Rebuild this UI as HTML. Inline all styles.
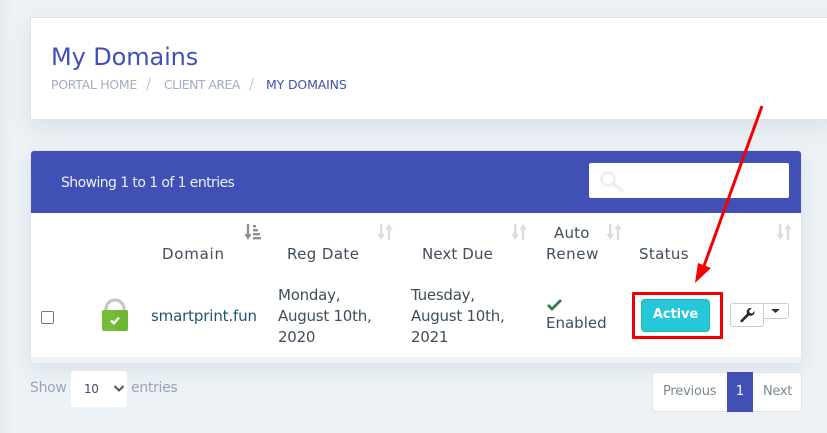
<!DOCTYPE html>
<html><head><meta charset="utf-8"><style>
html,body{margin:0;padding:0}
body{width:827px;height:433px;overflow:hidden;position:relative;background:#ecf2f6;font-family:"DejaVu Sans","Liberation Sans",sans-serif;color:#3a4a5a}
.a{position:absolute;white-space:nowrap}
.t{font-size:15px;line-height:21px;color:#3f4d5c}
</style></head><body>
<div class="a" style="left:0;top:0;width:14px;height:433px;background:linear-gradient(90deg,#e6edf1,#ecf2f6)"></div>
<div class="a" style="left:30px;top:17px;width:800px;height:101px;background:#fff;border:1px solid #dde3e7;box-shadow:0 8px 22px rgba(60,80,100,.1)"></div>
<div class="a" style="left:51px;top:42px;font-size:24px;line-height:30px;color:#4150b5;letter-spacing:-.1px">My Domains</div>
<div class="a" style="left:51px;top:76px;font-size:12.5px;line-height:17px;color:#a3adbd;letter-spacing:-.3px">PORTAL HOME</div>
<div class="a" style="left:146px;top:75px;font-size:15px;line-height:19px;color:#c5cbd3">/</div>
<div class="a" style="left:164px;top:76px;font-size:12.5px;line-height:17px;color:#a3adbd;letter-spacing:-.55px">CLIENT AREA</div>
<div class="a" style="left:249px;top:75px;font-size:15px;line-height:19px;color:#c5cbd3">/</div>
<div class="a" style="left:266px;top:76px;font-size:12.5px;line-height:17px;color:#4150b5;letter-spacing:-.15px">MY DOMAINS</div>

<div class="a" style="left:31px;top:151px;width:770px;height:212px;background:#fff;border-radius:3px 3px 0 0;box-shadow:0 0 0 1px #dfe5e9,0 6px 20px rgba(60,80,100,.1)"></div>
<div class="a" style="left:31px;top:151px;width:770px;height:62px;background:#4050b4;border-radius:3px 3px 0 0"></div>
<div class="a" style="left:31px;top:357px;width:770px;height:6px;background:#edf3f7"></div>
<div class="a" style="left:61px;top:174px;font-size:14px;line-height:18px;color:#edf0fa;letter-spacing:-.58px">Showing 1 to 1 of 1 entries</div>
<div class="a" style="left:589px;top:163px;width:200px;height:35px;background:#fff;border-radius:2px"></div>
<svg class="a" style="left:598px;top:169px" width="28" height="26" viewBox="0 0 28 26"><circle cx="10" cy="10" r="6.5" fill="none" stroke="#eceef0" stroke-width="2.6"/><path d="M15 15L24 21.5" stroke="#eceef0" stroke-width="3.6" stroke-linecap="round"/></svg>

<div class="a t" style="left:162px;top:244px;letter-spacing:.75px">Domain</div>
<div class="a t" style="left:287px;top:244px;letter-spacing:.4px">Reg Date</div>
<div class="a t" style="left:422px;top:244px;letter-spacing:.12px">Next Due</div>
<div class="a t" style="left:554px;top:223px;letter-spacing:.2px">Auto</div>
<div class="a t" style="left:546px;top:244px;letter-spacing:.6px">Renew</div>
<div class="a t" style="left:639px;top:244px;letter-spacing:.35px">Status</div>

<svg class="a" style="left:0;top:0" width="827" height="433" viewBox="0 0 827 433">
<g fill="none" stroke="#8c8f93" stroke-width="2.4"><path d="M248 224V238"/><path d="M245 234L248 239L251 234" fill="#8c8f93" stroke-width="1"/></g>
<g fill="#8c8f93"><rect x="253" y="225" width="3" height="2.4"/><rect x="253" y="229" width="5" height="2.4"/><rect x="253" y="233" width="7" height="2.4"/><rect x="253" y="237" width="8" height="2.4"/></g>
<g id="s" fill="#dcdcdc">
<path d="M380 224h2.400v10h2.400l-3.600 6-3.600-6h2.400zM387.800 240v-10.500h-2.400l3.600-5.500 3.600 5.500h-2.400V240z"/>
<path d="M514 224h2.400v10h2.400l-3.600 6-3.600-6h2.400zM521.800 240v-10.500h-2.400l3.600-5.500 3.600 5.500h-2.400V240z"/>
<path d="M609 224h2.400v10h2.400l-3.600 6-3.600-6h2.400zM616.800 240v-10.500h-2.400l3.600-5.500 3.600 5.500h-2.400V240z"/>
<path d="M779 224h2.400v10h2.400l-3.600 6-3.600-6h2.400zM786.800 240v-10.500h-2.400l3.600-5.500 3.600 5.500h-2.400V240z"/>
</g>
<path d="M106 312V309a9 9 0 0 1 18 0V312" fill="none" stroke="#c6c6c6" stroke-width="3.200"/>
<rect x="102" y="310" width="26" height="21" rx="2" fill="#77bd3c"/>
<path d="M115 310h11a2 2 0 0 1 2 2v17a2 2 0 0 1-2 2h-11z" fill="#6fb536"/>
<path d="M111 320.500l3 2.800 5-5.800" fill="none" stroke="#fff" stroke-width="2.400"/>
<path d="M548 305l4 4 9-9" fill="none" stroke="#3c7a4c" stroke-width="2.800"/>
</svg>

<div class="a" style="left:41px;top:311px;width:11px;height:11px;border:1px solid #777;border-radius:2px;background:#fff"></div>
<div class="a" style="left:151px;top:305px;font-size:15px;line-height:22px;color:#1f5573;letter-spacing:-.15px">smartprint.fun</div>
<div class="a t" style="left:278px;top:285px;letter-spacing:-.25px">Monday,<br>August 10th,<br>2020</div>
<div class="a t" style="left:411px;top:285px;letter-spacing:-.25px">Tuesday,<br>August 10th,<br>2021</div>
<div class="a t" style="left:546px;top:313px">Enabled</div>

<div class="a" style="left:632px;top:292px;width:85px;height:41px;border:3px solid #f40000;border-radius:1px;background:#fff"></div>
<div class="a" style="left:641px;top:299px;width:67px;height:31px;background:#25c7d9;border:1.5px solid #1cbd9f;border-radius:4px;color:#fff;font-size:13px;font-weight:bold;line-height:29px;text-align:center;letter-spacing:-.1px">Active</div>

<div class="a" style="left:763px;top:303px;width:25px;height:14px;border:1px solid #ccc;border-left:0;border-radius:0 3px 3px 0;background:#fff"></div>
<div class="a" style="left:730px;top:303px;width:32px;height:22px;border:1px solid #ccc;border-radius:3px 0 3px 3px;background:#fff"></div>
<svg class="a" style="left:732px;top:303px" width="60" height="24" viewBox="0 0 60 24">
<path d="M8 18l7-7.500a4 4 0 0 1 1-4.500c1-1 2.500-1.200 3.700-.8L17 8l1 2 2 .5 2.500-2.500a4 4 0 0 1-5.500 4.500L10 19.500z" fill="#2a2a2a"/>
<path d="M39 6h9l-4.500 4z" fill="#333"/></svg>

<div class="a" style="left:30px;top:379px;font-size:14px;line-height:18px;color:#9aa4b4;letter-spacing:-.3px">Show</div>
<div class="a" style="left:71px;top:371px;width:56px;height:36px;background:#fff;border-radius:3px"></div>
<div class="a" style="left:84px;top:381px;font-size:12px;line-height:16px;color:#4a4a6a;letter-spacing:-.4px">10</div>
<svg class="a" style="left:113px;top:384px" width="12" height="10" viewBox="0 0 12 10"><path d="M1.500 2l4.500 4.500L10.500 2" fill="none" stroke="#555" stroke-width="2"/></svg>
<div class="a" style="left:131px;top:379px;font-size:14px;line-height:18px;color:#9aa4b4;letter-spacing:-.3px">entries</div>

<div class="a" style="left:652px;top:372px;width:148px;height:38px;background:#fff;border:1px solid #dfe3e6;border-radius:4px"></div>
<div class="a" style="left:727px;top:372px;width:26px;height:40px;background:#4050b4"></div>
<div class="a" style="left:663px;top:383px;font-size:13px;line-height:17px;color:#7b8794;letter-spacing:-.2px">Previous</div>
<div class="a" style="left:727px;top:383px;width:26px;text-align:center;font-size:13px;line-height:17px;color:#fff">1</div>
<div class="a" style="left:763px;top:383px;font-size:13px;line-height:17px;color:#7b8794;letter-spacing:-.3px">Next</div>

<svg class="a" style="left:0;top:0" width="827" height="433" viewBox="0 0 827 433">
<path d="M762 106L704 266" stroke="#f40000" stroke-width="3" fill="none"/>
<path d="M695 283L698 263L711 268z" fill="#f40000"/>
</svg>
</body></html>
